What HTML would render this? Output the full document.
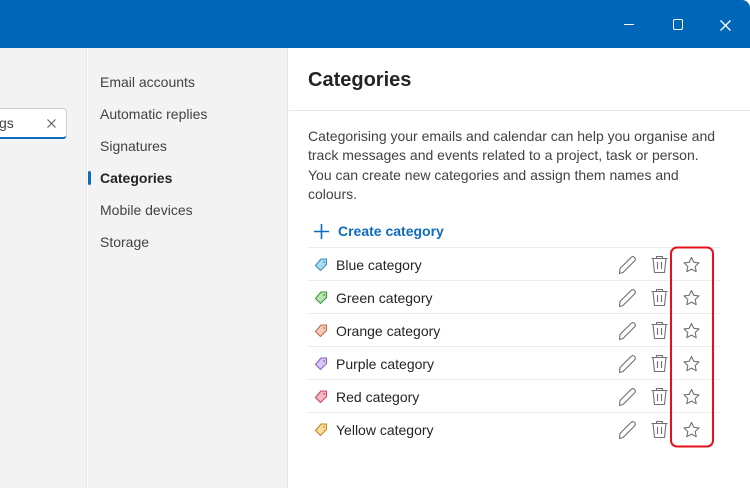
<!DOCTYPE html>
<html><head><meta charset="utf-8"><style>
*{margin:0;padding:0;box-sizing:border-box}
body{width:750px;height:488px;overflow:hidden;background:#fff;font-family:"Segoe UI","Liberation Sans",sans-serif;position:relative;color:#242424}
.a{position:absolute}
.title{left:0;top:0;width:750px;height:48px;background:#0067b8;border-top-right-radius:8px}
.left{left:0;top:48px;width:87px;height:440px;background:#f3f3f3;border-right:1px solid #e8e8e8}
.nav{left:88px;top:48px;width:200px;height:440px;background:#f3f3f3;border-right:1px solid #e6e6e6}
.ni{position:absolute;left:12px;font-size:14px;color:#424242}
.row{position:absolute;left:308px;width:412px;height:33px;border-top:1px solid #ececec;font-size:14px}
.row span{position:absolute;left:28px;top:9px}
.row svg{position:absolute}
</style></head><body>
<div class="a title">
<div class="a" style="left:624px;top:24px;width:10px;height:1px;background:#fff"></div>
<div class="a" style="left:673px;top:19px;width:10px;height:11px;border:1.3px solid #fff;border-radius:2px"></div>
<svg class="a" style="left:720px;top:20px" width="11" height="11"><path d="M0.5 0.5L10.5 10.5M10.5 0.5L0.5 10.5" stroke="#fff" stroke-width="1.3"/></svg>
</div>
<div class="a left">
<div class="a" style="left:-6px;top:60px;width:73px;height:31px;background:#fff;border:1px solid #d1d1d1;border-bottom:2px solid #0f6cbd;border-radius:4px"><span class="a" style="left:4px;top:6px;font-size:14px;color:#424242">gs</span>
<svg class="a" style="left:52px;top:10px" width="9" height="9"><path d="M0.5 0.5L8.5 8.5M8.5 0.5L0.5 8.5" stroke="#555" stroke-width="1"/></svg></div>
</div>
<div class="a nav">
<div class="ni" style="top:26px">Email accounts</div>
<div class="ni" style="top:58px">Automatic replies</div>
<div class="ni" style="top:90px">Signatures</div>
<div class="a" style="left:0;top:123px;width:3px;height:14px;background:#0f6cbd;border-radius:2px"></div>
<div class="ni" style="top:122px;font-weight:bold;color:#242424">Categories</div>
<div class="ni" style="top:154px">Mobile devices</div>
<div class="ni" style="top:186px">Storage</div>
</div>
<div class="a" style="left:308px;top:69px;font-size:20px;font-weight:bold;color:#242424">Categories</div>
<div class="a" style="left:289px;top:110px;width:461px;height:1px;background:#e6e6e6"></div>
<div class="a" style="left:308px;top:127px;width:408px;font-size:14px;line-height:19.3px;color:#424242">Categorising your emails and calendar can help you organise and track messages and events related to a project, task or person. You can create new categories and assign them names and colours.</div>
<svg class="a" style="left:314px;top:224px" width="15" height="15"><path d="M7.5 0V15M0 7.5H15" stroke="#0f6cbd" stroke-width="1.6"/></svg>
<div class="a" style="left:338px;top:223px;font-size:14px;font-weight:bold;color:#0f6cbd">Create category</div>
<div class="row" style="top:247px"><svg style="left:6px;top:10px" width="14" height="14" viewBox="0 0 14 14"><path d="M7 1H12.5V6.5L6.5 12.5L1.5 7.5Z" fill="#a8dcf3" stroke="#3a8fb8" stroke-width="1.1" stroke-linejoin="round"/><circle cx="10" cy="4" r=".9" fill="#3a8fb8"/></svg><span>Blue category</span></div>
<div class="row" style="top:280px"><svg style="left:6px;top:10px" width="14" height="14" viewBox="0 0 14 14"><path d="M7 1H12.5V6.5L6.5 12.5L1.5 7.5Z" fill="#b7e4b0" stroke="#3f9a3a" stroke-width="1.1" stroke-linejoin="round"/><circle cx="10" cy="4" r=".9" fill="#3f9a3a"/></svg><span>Green category</span></div>
<div class="row" style="top:313px"><svg style="left:6px;top:10px" width="14" height="14" viewBox="0 0 14 14"><path d="M7 1H12.5V6.5L6.5 12.5L1.5 7.5Z" fill="#f6c9b6" stroke="#c0704f" stroke-width="1.1" stroke-linejoin="round"/><circle cx="10" cy="4" r=".9" fill="#c0704f"/></svg><span>Orange category</span></div>
<div class="row" style="top:346px"><svg style="left:6px;top:10px" width="14" height="14" viewBox="0 0 14 14"><path d="M7 1H12.5V6.5L6.5 12.5L1.5 7.5Z" fill="#d9c7f3" stroke="#8763c2" stroke-width="1.1" stroke-linejoin="round"/><circle cx="10" cy="4" r=".9" fill="#8763c2"/></svg><span>Purple category</span></div>
<div class="row" style="top:379px"><svg style="left:6px;top:10px" width="14" height="14" viewBox="0 0 14 14"><path d="M7 1H12.5V6.5L6.5 12.5L1.5 7.5Z" fill="#f5b8c4" stroke="#c54861" stroke-width="1.1" stroke-linejoin="round"/><circle cx="10" cy="4" r=".9" fill="#c54861"/></svg><span>Red category</span></div>
<div class="row" style="top:412px"><svg style="left:6px;top:10px" width="14" height="14" viewBox="0 0 14 14"><path d="M7 1H12.5V6.5L6.5 12.5L1.5 7.5Z" fill="#f8dc9e" stroke="#c08a24" stroke-width="1.1" stroke-linejoin="round"/><circle cx="10" cy="4" r=".9" fill="#c08a24"/></svg><span>Yellow category</span></div>
<svg class="a" style="left:0;top:0" width="750" height="488">
<defs>
<g id="ic">
<path d="M620 268.5L631 257.5Q633.5 255.5 635 258Q636 260 634 261.5L623 272.5L619.5 273.5Z" fill="none" stroke="#707070" stroke-width="1.1" stroke-linejoin="round"/>
<path d="M651.5 258.5H667.5M656.5 258.5V256.5H662.5V258.5M653 258.5L654.5 272.5H664.5L666 258.5M657.5 262V269M661.5 262V269" fill="none" stroke="#707070" stroke-width="1.1" stroke-linejoin="round"/>
<path d="M691.5 257.5L693.8 262.3L699 262.9L695.2 266.5L696.2 271.7L691.5 269.1L686.8 271.7L687.8 266.5L684 262.9L689.2 262.3Z" fill="none" stroke="#707070" stroke-width="1.1" stroke-linejoin="round"/>
</g></defs>
<use href="#ic"/><use href="#ic" y="33"/><use href="#ic" y="66"/><use href="#ic" y="99"/><use href="#ic" y="132"/><use href="#ic" y="165"/>
<rect x="671" y="247.5" width="42" height="199" rx="6" fill="none" stroke="#e5101a" stroke-width="2"/>
</svg>
</body></html>
